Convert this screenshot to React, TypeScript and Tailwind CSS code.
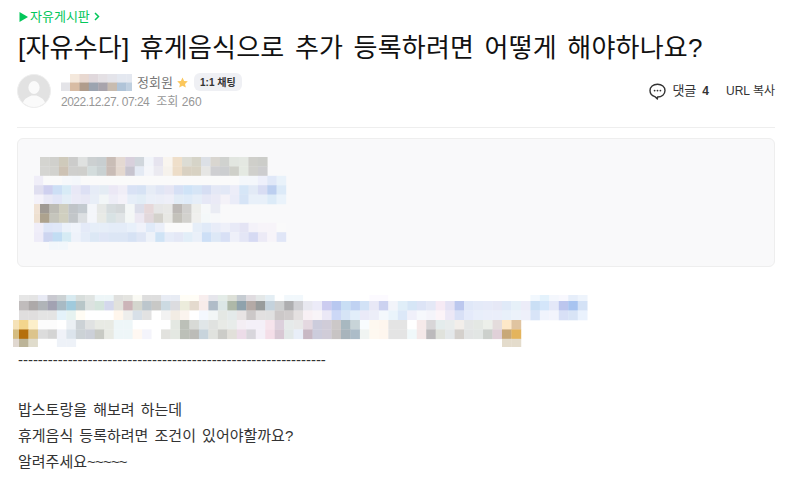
const FONT = "font-['Liberation_Sans','Noto_Sans_CJK_KR',sans-serif]";

type Row = { x: number; y: number; h: number; w: number; c: string };

function Mosaic({ rows, width, height }: { rows: Row[]; width: number; height: number }) {
  return (
    <svg width={width} height={height} viewBox={`0 0 ${width} ${height}`} className="block blur-[0.4px]">
      {rows.map((r, i) =>
        r.c.split(" ").map((col, j) => (
          <rect key={`${i}-${j}`} x={r.x + j * r.w} y={r.y} width={r.w + 0.3} height={r.h + 0.3} fill={`#${col}`} />
        )),
      )}
    </svg>
  );
}

const BOX_ROWS: Row[] = [
  { x: 6, y: 0, h: 9.4, w: 9.47, c: "d4d4d0 d0d0cc cfcabb cccccb dfe1e0 ccd0d1 c8ced0 c9bdb6 e4d9d2 d8d0dc d0d6dc f2f5fa e6e4ef f9f5ef efdfca dcdcd4 d6d4c8 dce0e6 d9d6d0 d0d2cf e2e6e0 e4e8e2 cfcfca cccdc9" },
  { x: 6, y: 9.4, h: 9.4, w: 9.47, c: "d5d5d2 d2d2ce cdc2b4 cfcfcd cfcfcc d3dcdc c9d1d2 c9bcb6 e4d8cf c7c4cf e4eaf4 f5f6fa ebeaf1 f6f2ec edddc8 d9d1c2 d8d2c3 e6e6e4 cfcfd2 ccced0 cfd0c9 e4e9e2 d0d0cc cdcdcf" },
  { x: 0, y: 18.8, h: 9.4, w: 9.33, c: "f0eef8 fafafa fafafa f6f8fb f4f7fb fafafa fafafa fafafa fafafa fafafa fafafa fafafa fafafa fafafa fafafa fafafa fafafa fafafa fafafa fafafa fafafa fafafa f4f7fb f4f7fb eef0fb e0e8f8 e9f2fa" },
  { x: 0, y: 28.2, h: 9.4, w: 9.33, c: "e0dff0 cfd0ef cddff5 d8ebf6 e8e8f6 dde0f4 e6ecf7 e4ecf4 ebe8f5 f0eef7 d9e2f5 d6e2f4 e6ecf6 e0e6f5 e6e6f4 d6e0f5 cfe3f7 d6e5f6 d6def3 e4e8f6 e2e8f6 ecedf8 d6e6f7 e2eaf6 d8ddf3 bccff0 dceaf8" },
  { x: 0, y: 37.6, h: 9.4, w: 9.33, c: "f4f2fa e9e9f6 e2e6f7 e4eef7 eaeaf6 e8e8f5 e8eef7 f2f6f7 eeeef7 f4f2f9 e6eef8 e2edf6 eaeff8 ebeef7 eeeff8 e2ecf6 dfebf8 e6eef8 e6e8f6 eaeaf6 f4f2f8 eaecf8 d6e4f6 e8f0f9 e8f0f9 dcebf8 eaf3fb" },
  { x: 0, y: 47, h: 9.4, w: 6, c: "f0e2d4" },
  { x: 0, y: 56.4, h: 9.4, w: 6, c: "eee0d0" },
  { x: 6, y: 47, h: 9.4, w: 9.47, c: "a09a94 bdbcb5 cfcec0 c0c4c8 c4cad0 f4f6fa e6e8e6 d6dcde d4d8da f4f7f7 dcdeea e6d8da e6e6e6 e8e8e6 bdb9b6 d0cfcd eeefec f6f8f9 eaecf4" },
  { x: 6, y: 56.4, h: 9.4, w: 9.47, c: "ada28e c5c5bc d0cfbf c2c6c9 dcdfe2 f4f6fa e8eae6 d8e2e4 e0e4e6 f4f7f6 ece8f2 e2d8dc d4d2cc e8e8e4 c4c2bb d2d1cd f0f0ee f4f8f9 f7f8fa" },
  { x: 0, y: 65.8, h: 9.4, w: 9.33, c: "f0eef9 dee6f8 e0e8f8 ecf2fa f0f4fb e4eaf8 e6eef8 e6eef8 e4ecf8 e4ecf8 e8f0fa f0f2fa e0eaf8 ebeff9 fafafa fafafa fafafa e6eef8 e0eaf8 e8ecf8 eef0f9 e8eaf7 e4e4f4 f4f2f9 f7f4f9 f7f4f9 fafafa" },
  { x: 0, y: 75.2, h: 9.4, w: 9.33, c: "eeecf8 cdd5f0 c2ddf3 d6ebf4 eef2fa e4ecf8 dce8f5 dfe6f6 dce6f5 dce6f5 d6e2f4 dfe6f5 eef2f9 cfe3f5 e6ecf8 e4e8f6 e2eef8 eaf0f9 cddff6 dde8f6 d8e0f5 eef0f9 e4e6f6 d6daf3 eceaf6 f7f4f9 e0e6f7" },
  { x: 15, y: 84.6, h: 8, w: 9.33, c: "f2f7fb f2f7fb" },
];

const BODY_ROWS: Row[] = [
  { x: 6, y: 0, h: 6, w: 9.47, c: "e6e6e6 e4e4e4 e8eaf4 c9c9d0 ccd2d4 d8eaf0 d8dedc e0e4e2 eef6f8 eef6f8 e0e0de e4e4e0 fafaf4 dedede dedede e8ecf4 e8ecf4 fffdf6 fffdf6 f8eeee e6e6ec e4ece8 dde0d8 c6ccd2 e0dce0 e4e8e8 e4eef4 ffffff f2f8fc f2f8fc ffffff ffffff ffffff ffffff ffffff ffffff ffffff fcfaff fcfaff ffffff ffffff ffffff ffffff ffffff ffffff ffffff ffffff ffffff ffffff ffffff ffffff ffffff ffffff ffffff f2f8fe e4f2fc f4f7fd f8f8fe e6eefa eef4fc" },
  { x: 6, y: 6, h: 9.5, w: 9.47, c: "c0bcbc ada9a9 b0b4b8 a2a2b2 a8bac4 a0cadc b8c6c8 dce2e0 d4e4dc d4d8ec e2e2dc ccb4b8 d4d6ce bcc6cc c8c8c6 ccdae2 dcdce0 ececdc e4dace f8ecea b0bcc8 dce6e6 aeb8a8 8fa2ac b4aaa6 989c9c c4d2dc cdcfd0 aeaeb0 d0d0d4 e8e8f0 ecebf8 ccccf0 b8c8f0 c8def4 c0d2f2 d2e2f6 e8e8f6 ccd2f0 f2f4fa e0eef8 d6e6f6 dde4f6 e4e8f6 f6eaf4 e4e2f4 bcc8ee e0e8f8 e4eaf8 e6eaf8 e6e8f6 e0eaf8 e6f0f8 ececf8 cadff5 d4e6fa e4e8f8 bcc6ee a8c4f0 d4e2f6" },
  { x: 6, y: 15.5, h: 9.5, w: 9.47, c: "e0dede e0dede e4e4e4 e4e4e4 e4f2fa e6f2f0 fffcf4 ffffff ffffff ffffff fff6ec eeeeec d8e0e8 e2e2e2 ffffff f2f2f2 f2ece4 fbf4ee ffffff f4f8fe f2f6f6 e4e8e4 e4eaea e8e4e4 ccc8c8 e2e0e0 e0e0e0 ccc8c8 d0cccc e4e0e0 f8f0f4 f8f4f8 ebe8f6 ccd8f6 d6e4f6 e2eefa eaeaf8 eceef8 f4f8fc eaf4fb dce8f8 f0f0fa f6f8fc f4f4fa fcf4f8 ece8f6 d8e0f6 e4eafa e8eefa eaeefa eaeefa e8f0fa ecf2fa eef0fa d8e4f8 f0f4fd f2f4fc d8e0f6 d8e4f6 eaf2fd" },
  { x: 0, y: 25, h: 9.4, w: 6, c: "f5e2b8" },
  { x: 0, y: 34.4, h: 9.4, w: 6, c: "d4bc80" },
  { x: 0, y: 43.8, h: 8, w: 6, c: "e0d8d0" },
  { x: 6, y: 25, h: 9.4, w: 9.47, c: "f3d58d fcefca fcfcfc fcfcfc ffffff ebf0f4 ccd2d6 e0e2e2 e8eae4 e8eae4 eef6f8 eef6f8 ffffff ffffff ffffff ffffff e4e8e2 bcc0b8 d8dad6 e0e6e8 e0e2e0 e8eae6 e8ecea f4eef4 f4f0f8 f4f0f8 f6e4ec dcd0dc e6eaea e8e8e8 e4d8e0 ccccdc d0ccd8 ccc8c8 a8b8c0 c8d4d8 f8fcfe fef8f0 fef6ee e4e4e4 e4e4e4 ffffff f6eaea d8d6d8 e4ecec e8ecec f2eeea e4e6e6 e4e8e4 ecefea e4dcdc fde8c8 e0c4a0" },
  { x: 6, y: 34.4, h: 9.4, w: 9.47, c: "b56f0c dcc48c dcdcdc d4d4d4 f0f2f8 dce4ec ccd2d6 ccd0d8 c8cac4 e8eae4 eef6f8 eef6f8 fff8f2 f4f4fb ffffff e2e2de e4e8e2 bcc0b8 bcbcb8 c8d4dc e0e2de ccccc8 e2e0da ecdce8 d8d6dc f4f0f8 f4dee8 d8c8d4 e2e8e8 e8eef8 c8b8c4 ccccdc d0ccd8 c8c4c4 a8b4bc acbcc8 f0f4f2 fef8f0 fef6ee e4e4e4 e4e4e4 f0f8fa f4e8e8 bcbabc e0e2dc e4e8ea d4d0cc e2e4e4 e2e6e4 ccd0cc e0d0d8 c8a878 e4b45c" },
  { x: 6, y: 43.8, h: 8, w: 9.47, c: "bcb498 e0dccc ffffff ffffff eef2f8 eef2f8" },
  { x: 489, y: 43.8, h: 8, w: 9.47, c: "e4dccc e4dccc" },
];

const NAME_ROWS: Row[] = [
  { x: 9, y: 0, h: 8.5, w: 9.4, c: "f4e8dc e8d8d0 e0d8dc e4e0e4 e4e4ea e4e8f0 e4e8f0" },
  { x: 0, y: 8.5, h: 8.5, w: 9, c: "e4e4e8" },
  { x: 9, y: 8.5, h: 8.5, w: 9.4, c: "d8bca4 b09c8c 9ca4b0 a8a4ac c8bcb0 b0c4d8 c0d0e0" },
];

export default function App() {
  return (
    <div className={`${FONT} w-[800px] h-[488px] overflow-hidden bg-white pl-[17px] pr-[25px] pt-[9px]`}>
      <div className="flex items-center h-[15px] text-[13px] leading-[15px] text-[#03c75a]">
        <svg width="10" height="10" viewBox="0 0 10 10" className="ml-[2px] mr-px mt-[1px]">
          <polygon points="0.5,0 9,5 0.5,10" fill="#03c75a" />
        </svg>
        <span>자유게시판</span>
        <svg width="6" height="9" viewBox="0 0 6 9" className="ml-[4px]">
          <path d="M1 1 L4.5 4.5 L1 8" fill="none" stroke="#03c75a" strokeWidth="1.5" />
        </svg>
      </div>

      <h1 className="mt-[6px] ml-px h-[36px] text-[26px] leading-[36px] font-normal text-[#111] whitespace-nowrap tracking-[0.2px] [word-spacing:3px]">
        [자유수다] 휴게음식으로 추가 등록하려면 어떻게 해야하나요?
      </h1>

      <div className="mt-[7px] flex items-start justify-between h-[54px]">
        <div className="flex">
          <div className="mt-[1px] w-[34px] h-[34px] rounded-full bg-[#e2e2e2] border border-[#eeeeee] overflow-hidden">
            <svg width="32" height="32" viewBox="1 1 32 32">
              <ellipse cx="17" cy="13.5" rx="5.6" ry="6.5" fill="#fafafa" />
              <path d="M6 29 C7 24 12 23 14.5 21.5 L19.5 21.5 C22 23 27 24 28 29 L28 34 L6 34 Z" fill="#fafafa" />
            </svg>
          </div>
          <div className="ml-[10px]">
            <div className="flex items-center h-[18px]">
              <Mosaic rows={NAME_ROWS} width={71} height={17} />
              <span className="ml-[5px] mt-[1px] text-[13px] text-[#777]">정회원</span>
              <svg width="11" height="11" viewBox="0 0 24 24" className="ml-[4px] mt-[1px]">
                <polygon points="12,1 15.5,8.5 23.5,9.5 17.5,15 19.2,23 12,19 4.8,23 6.5,15 0.5,9.5 8.5,8.5" fill="#fbc75c" />
              </svg>
              <span className="ml-[6px] flex items-center justify-center w-[48px] h-[18px] rounded-[6px] bg-[#eff0f4] text-[10px] font-bold text-[#333]">
                1:1 채팅
              </span>
            </div>
            <div className="mt-[3px] text-[12px] leading-[16px] text-[#979797] whitespace-nowrap">
              <span className="tracking-[-0.5px]">2022.12.27. 07:24</span>
              <span className="ml-[7px]">조회 260</span>
            </div>
          </div>
        </div>
        <div className="flex items-center h-[18px] mt-[9px] text-[12px] text-[#333]">
          <svg width="17" height="17" viewBox="0 0 17 17">
            <path d="M8.5 1.2 C12.9 1.2 16 3.9 16 7.6 C16 11.3 12.9 14 8.5 14 L8.4 16 L5.8 13.6 C3 12.8 1 10.5 1 7.6 C1 3.9 4.1 1.2 8.5 1.2 Z" fill="none" stroke="#333" strokeWidth="1.4" strokeLinejoin="round" />
            <circle cx="5.6" cy="7.6" r="0.9" fill="#333" />
            <circle cx="8.5" cy="7.6" r="0.9" fill="#333" />
            <circle cx="11.4" cy="7.6" r="0.9" fill="#333" />
          </svg>
          <span className="ml-[6px] text-[13px]">댓글</span>
          <span className="ml-[6px] font-bold">4</span>
          <span className="ml-[17px]">URL 복사</span>
        </div>
      </div>

      <div className="h-px bg-[#eeeeee]" />

      <div className="mt-[10px] h-[129px] rounded-[6px] border border-[#eeeeee] bg-[#f9f9fa] pl-[16px] pt-[18px]">
        <Mosaic rows={BOX_ROWS} width={256} height={94} />
      </div>

      <div className="mt-[28px] -ml-[4px]">
        <Mosaic rows={BODY_ROWS} width={580} height={52} />
      </div>

      <div className="ml-px text-[15px] leading-[26px] text-[#333] whitespace-nowrap [word-spacing:2px]">
        <p className="tracking-[-0.03px]">--------------------------------------------------------------</p>
        <p className="h-[24px]">&nbsp;</p>
        <p>밥스토랑을 해보려 하는데</p>
        <p>휴게음식 등록하려면 조건이 있어야할까요?</p>
        <p>
          알려주세요<span className="tracking-[-0.8px]">~~~~~</span>
        </p>
      </div>
    </div>
  );
}
